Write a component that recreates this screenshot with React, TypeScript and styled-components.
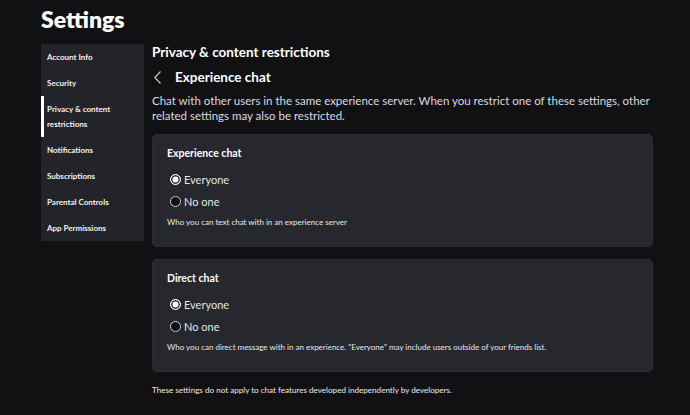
import styled, { createGlobalStyle } from 'styled-components';

const GlobalStyle = createGlobalStyle`
    body {
        margin: 0;
        background: #111114;
        color: #ffffff;
        font-family: Lato, 'Liberation Sans', sans-serif;
    }
`;

const Page = styled.div`
    padding: 4px 0 0 41px;
    width: 612px;
`;

const Title = styled.h1`
    margin: 0;
    font-size: 23px;
    line-height: 30px;
    font-weight: 800;
    height: 40px;
`;

const Layout = styled.div`
    display: flex;
    align-items: flex-start;
    gap: 8px;
`;

const Sidebar = styled.nav`
    width: 103px;
    background: #232429;
    display: flex;
    flex-direction: column;
`;

const NavItem = styled.div<{ $active?: boolean }>`
    padding: 5.5px 6px 5.5px 3px;
    font-size: 8px;
    line-height: 15px;
    font-weight: 700;
    color: #f2f2f4;
    border-left: 3px solid ${(p) => (p.$active ? '#ffffff' : 'transparent')};
`;

const Main = styled.main`
    flex: 1;
    display: flex;
    flex-direction: column;
`;

const Heading = styled.h2`
    margin: 0;
    font-size: 13.5px;
    line-height: 17px;
    font-weight: 700;
`;

const BackRow = styled.div`
    display: flex;
    align-items: center;
    height: 18px;
    margin-top: 7px;
    gap: 14px;
    padding-left: 2px;
`;

const SubHeading = styled.h3`
    margin: 0;
    font-size: 13.5px;
    line-height: 18px;
    font-weight: 700;
`;

const Description = styled.p`
    margin: 8px 0 11px;
    font-size: 11.5px;
    line-height: 14.5px;
    color: #d8dae0;
`;

const Card = styled.section`
    background: #26282e;
    border: 1px solid #2b2d33;
    border-radius: 5px;
    padding: 12px 14px 18px;
    margin-bottom: 12px;
`;

const CardTitle = styled.h4`
    margin: 0 0 9px;
    font-size: 10.5px;
    line-height: 13px;
    font-weight: 700;
`;

const RadioRow = styled.label`
    display: flex;
    align-items: center;
    height: 21.5px;
    gap: 3px;
    font-size: 11px;
    color: #e4e5e8;
`;

const RadioDot = styled.span<{ $checked?: boolean }>`
    box-sizing: border-box;
    width: 11px;
    height: 11px;
    margin-left: 3px;
    border-radius: 50%;
    border: ${(p) => (p.$checked ? '1.5px solid #ffffff' : '1px solid #cfd0d4')};
    background: ${(p) => (p.$checked ? '#ffffff' : '#111114')};
    box-shadow: ${(p) => (p.$checked ? 'inset 0 0 0 1.5px #2a2c32' : 'none')};
`;

const Helper = styled.p`
    margin: 4px 0 0;
    font-size: 8px;
    line-height: 12px;
    color: #e8e9ec;
`;

const Footnote = styled.p`
    margin: 0;
    font-size: 8.1px;
    line-height: 12px;
    color: #e8e9ec;
`;

const navItems = [
    'Account Info',
    'Security',
    'Privacy & content restrictions',
    'Notifications',
    'Subscriptions',
    'Parental Controls',
    'App Permissions',
];

const settings = [
    {
        title: 'Experience chat',
        help: 'Who you can text chat with in an experience server',
    },
    {
        title: 'Direct chat',
        help: 'Who you can direct message with in an experience. "Everyone" may include users outside of your friends list.',
    },
];

const Chevron = () => (
    <svg width="7" height="13" viewBox="0 0 7 13" fill="none">
        <path d="M6.5 0.5L0.8 6.5L6.5 12.5" stroke="#d0d1d5" strokeWidth="1.1" />
    </svg>
);

const App = () => {
    return (
        <Page>
            <GlobalStyle />
            <Title>Settings</Title>
            <Layout>
                <Sidebar>
                    {navItems.map((item) => (
                        <NavItem key={item} $active={item.startsWith('Privacy')}>
                            {item}
                        </NavItem>
                    ))}
                </Sidebar>
                <Main>
                    <Heading>Privacy &amp; content restrictions</Heading>
                    <BackRow>
                        <Chevron />
                        <SubHeading>Experience chat</SubHeading>
                    </BackRow>
                    <Description>
                        Chat with other users in the same experience server. When you restrict one of these settings, other
                        related settings may also be restricted.
                    </Description>
                    {settings.map((s) => (
                        <Card key={s.title}>
                            <CardTitle>{s.title}</CardTitle>
                            <RadioRow>
                                <RadioDot $checked />
                                Everyone
                            </RadioRow>
                            <RadioRow>
                                <RadioDot />
                                No one
                            </RadioRow>
                            <Helper>{s.help}</Helper>
                        </Card>
                    ))}
                    <Footnote>These settings do not apply to chat features developed independently by developers.</Footnote>
                </Main>
            </Layout>
        </Page>
    );
};

export default App;
